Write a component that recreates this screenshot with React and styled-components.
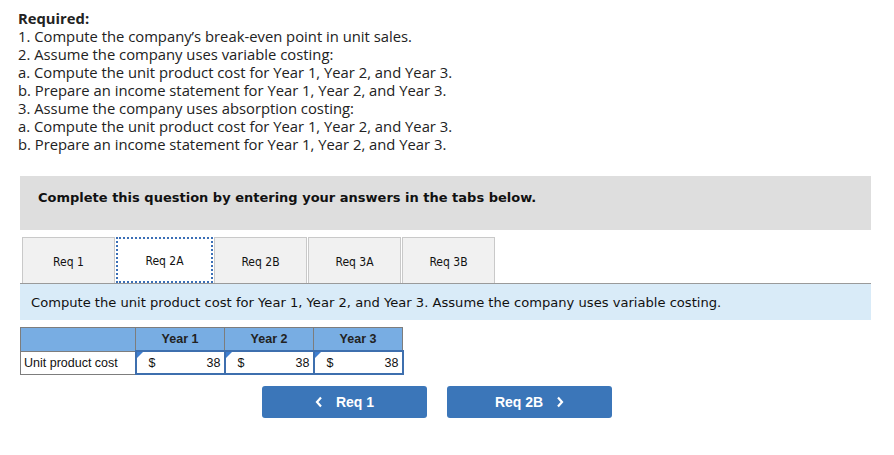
import React from "react";
import styled, { createGlobalStyle } from "styled-components";

const Global = createGlobalStyle`
  html, body { margin: 0; padding: 0; background: #fff; }
`;

const Page = styled.div`
  width: 894px;
  height: 455px;
  box-sizing: border-box;
  padding: 9px 23px 0 18px;
  font-family: "Open Sans", Lato, sans-serif;
`;

const Required = styled.div`
  font-size: 14.8px;
  line-height: 18px;
  color: #222;
`;

const Heading = styled.div`
  font-weight: 700;
`;

const Body = styled.div`
  margin-left: 2px;
  margin-top: 23px;
`;

const Instruction = styled.div`
  background: #dedede;
  height: 54px;
  box-sizing: border-box;
  padding: 14px 0 0 18px;
  font-family: "DejaVu Sans", Verdana, sans-serif;
  font-weight: 700;
  font-size: 13px;
  line-height: 16px;
  color: #111;
`;

const Tabs = styled.div`
  display: flex;
  gap: 1px;
  margin-top: 7px;
  padding-left: 2px;
`;

const Tab = styled.div`
  height: 46px;
  box-sizing: border-box;
  display: flex;
  align-items: center;
  justify-content: center;
  padding-top: 2px;
  font-family: "DejaVu Sans Condensed", "DejaVu Sans", sans-serif;
  font-size: 12px;
  color: #111;
  background: ${(p) => (p.$active ? "#fff" : "#f1f1f1")};
  border: ${(p) => (p.$active ? "2px dotted #3b6fb6" : "1px solid #c9c9c9")};
  border-bottom: ${(p) => (p.$active ? "2px dotted #3b6fb6" : "none")};
  width: ${(p) => (p.$active ? "97px" : "93px")};
  margin-bottom: ${(p) => (p.$active ? "-1px" : "0")};
  position: relative;
  z-index: ${(p) => (p.$active ? 1 : 0)};
`;

const Prompt = styled.div`
  border-top: 1px solid #9a9a9a;
  background: #d9ebf8;
  height: 37px;
  box-sizing: border-box;
  display: flex;
  align-items: center;
  padding: 1px 0 0 11px;
  font-family: "DejaVu Sans", Verdana, sans-serif;
  font-size: 13.1px;
  color: #111;
`;

const Table = styled.table`
  margin-top: 7px;
  border-collapse: collapse;
  font-family: "Liberation Sans", Arial, sans-serif;
  font-size: 12px;
`;

const Th = styled.th`
  background: #78ade3;
  border: 1px solid #7d7d7d;
  height: 22px;
  width: ${(p) => p.$w || 88}px;
  padding: 0;
  font-weight: 700;
  font-size: 12.5px;
  color: #222;
  text-align: center;
`;

const Label = styled.td`
  border: 1px solid #7d7d7d;
  height: 22px;
  padding: 0 0 0 3px;
  color: #111;
  font-size: 12.5px;
`;

const Cell = styled.td`
  border: 2px solid #3e6fae;
  padding: 0 3px 0 12px;
  height: 20px;
  position: relative;
  font-size: 12.5px;
  color: #111;
  &::before {
    content: "";
    position: absolute;
    left: 0;
    top: 0;
    border-top: 6px solid #3e7ed0;
    border-right: 6px solid transparent;
  }
`;

const CellInner = styled.div`
  display: flex;
  justify-content: space-between;
`;

const Nav = styled.div`
  display: flex;
  gap: 20px;
  margin-top: 11px;
  padding-left: 242px;
`;

const NavButton = styled.div`
  width: 165px;
  height: 32px;
  border-radius: 3px;
  background: #3b76b9;
  color: #fff;
  display: flex;
  align-items: center;
  justify-content: center;
  gap: 13px;
  font-family: "Liberation Sans", Arial, sans-serif;
  font-weight: 700;
  font-size: 14px;
`;

const Chevron = ({ dir }) => (
  <svg width="8" height="12" viewBox="0 0 8 12">
    <path
      d={dir === "left" ? "M6 1.5 L2 6 L6 10.5" : "M2 1.5 L6 6 L2 10.5"}
      fill="none"
      stroke="#fff"
      strokeWidth="2.2"
    />
  </svg>
);

export default function App() {
  const tabs = ["Req 1", "Req 2A", "Req 2B", "Req 3A", "Req 3B"];
  return (
    <>
      <Global />
      <Page>
        <Required>
          <Heading>Required:</Heading>
          <div>1. Compute the company’s break-even point in unit sales.</div>
          <div>2. Assume the company uses variable costing:</div>
          <div>a. Compute the unit product cost for Year 1, Year 2, and Year 3.</div>
          <div>b. Prepare an income statement for Year 1, Year 2, and Year 3.</div>
          <div>3. Assume the company uses absorption costing:</div>
          <div>a. Compute the unit product cost for Year 1, Year 2, and Year 3.</div>
          <div>b. Prepare an income statement for Year 1, Year 2, and Year 3.</div>
        </Required>
        <Body>
          <Instruction>Complete this question by entering your answers in the tabs below.</Instruction>
          <Tabs>
            {tabs.map((t) => (
              <Tab key={t} $active={t === "Req 2A"}>
                {t}
              </Tab>
            ))}
          </Tabs>
          <Prompt>
            Compute the unit product cost for Year 1, Year 2, and Year 3. Assume the company uses variable costing.
          </Prompt>
          <Table>
            <thead>
              <tr>
                <Th $w={114}></Th>
                <Th>Year 1</Th>
                <Th>Year 2</Th>
                <Th>Year 3</Th>
              </tr>
            </thead>
            <tbody>
              <tr>
                <Label>Unit product cost</Label>
                {[1, 2, 3].map((i) => (
                  <Cell key={i}>
                    <CellInner>
                      <span>$</span>
                      <span>38</span>
                    </CellInner>
                  </Cell>
                ))}
              </tr>
            </tbody>
          </Table>
          <Nav>
            <NavButton>
              <Chevron dir="left" />
              <span>Req 1</span>
            </NavButton>
            <NavButton>
              <span>Req 2B</span>
              <Chevron dir="right" />
            </NavButton>
          </Nav>
        </Body>
      </Page>
    </>
  );
}
